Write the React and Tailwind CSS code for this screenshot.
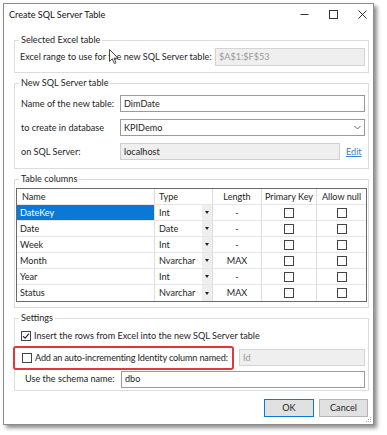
import React from 'react';

const rows = [
    { name: 'DateKey', type: 'Int', len: '-' },
    { name: 'Date', type: 'Date', len: '-' },
    { name: 'Week', type: 'Int', len: '-' },
    { name: 'Month', type: 'Nvarchar', len: 'MAX' },
    { name: 'Year', type: 'Int', len: '-' },
    { name: 'Status', type: 'Nvarchar', len: 'MAX' },
];

function Box({ checked }) {
    return (
        <span className="w-[10px] h-[10px] border border-[#444] bg-white flex items-center justify-center shrink-0">
            {checked && (
                <svg width="8" height="8" viewBox="0 0 8 8">
                    <path d="M1 4.2 L3.1 6.2 L7 1.6" fill="none" stroke="#222" strokeWidth="1.1" />
                </svg>
            )}
        </span>
    );
}

function Legend({ children }) {
    return (
        <span className="block w-fit -mt-[7px] ml-[4px] px-[2px] bg-white leading-[12px] text-[#1e1e1e]">
            {children}
        </span>
    );
}

export default function App() {
    return (
        <div className="w-[387px] h-[435px] bg-white pt-[3px] pl-[3px] font-['Lato',sans-serif] text-[9.1px] text-[#1e1e1e] whitespace-nowrap">
            <div className="relative w-[371px] h-[422px] border border-[#8c8c8c] bg-white shadow-[3px_3px_4px_rgba(0,0,0,0.45)] flex flex-col">
                {/* title bar */}
                <div className="h-[21px] flex items-center pl-[5px] shrink-0">
                    <span className="text-[#111]">Create SQL Server Table</span>
                    <div className="ml-auto flex items-center gap-[20px] pr-[6px]">
                        <svg width="9" height="9" viewBox="0 0 9 9"><path d="M0.5 4.5 H8.5" stroke="#333" strokeWidth="1" /></svg>
                        <svg width="9" height="9" viewBox="0 0 9 9"><rect x="0.5" y="0.5" width="8" height="8" fill="none" stroke="#333" strokeWidth="1" /></svg>
                        <svg width="9" height="9" viewBox="0 0 9 9"><path d="M0.5 0.5 L8.5 8.5 M8.5 0.5 L0.5 8.5" stroke="#333" strokeWidth="1" /></svg>
                    </div>
                </div>

                <div className="px-[10px] pr-[4px] flex flex-col">
                    {/* Selected Excel table */}
                    <div className="mt-[15px] h-[33px] border border-[#dcdcdc]">
                        <Legend>Selected Excel table</Legend>
                        <div className="mt-[2px] flex items-center pl-[5px] pr-[3px]">
                            <span>Excel range to use for the new SQL Server table:</span>
                            <span className="ml-auto w-[150px] h-[18px] border border-[#d4d4d4] bg-[#efefef] flex items-center px-[3px] text-[#9a9a9a]">$A$1:$F$53</span>
                        </div>
                    </div>

                    {/* New SQL Server table */}
                    <div className="mt-[10px] h-[86px] border border-[#dcdcdc]">
                        <Legend>New SQL Server table</Legend>
                        <div className="mt-[6px] flex flex-col gap-[7px] pl-[6px] pr-[3px]">
                            <div className="flex items-center">
                                <span className="w-[99px]">Name of the new table:</span>
                                <span className="flex-1 h-[17px] border border-[#9a9a9a] bg-white flex items-center px-[3px]">DimDate</span>
                            </div>
                            <div className="flex items-center">
                                <span className="w-[99px]">to create in database</span>
                                <span className="flex-1 h-[17px] border border-[#9a9a9a] bg-white flex items-center px-[3px]">
                                    KPIDemo
                                    <svg className="ml-auto" width="7" height="5" viewBox="0 0 7 5"><path d="M0.5 1 L3.5 4 L6.5 1" fill="none" stroke="#555" strokeWidth="0.9" /></svg>
                                </span>
                            </div>
                            <div className="flex items-center">
                                <span className="w-[99px]">on SQL Server:</span>
                                <span className="w-[220px] h-[17px] border border-[#cfcfcf] bg-[#efefef] flex items-center px-[3px]">localhost</span>
                                <span className="ml-[6px] text-[#3a7dc9] underline">Edit</span>
                            </div>
                        </div>
                    </div>

                    {/* Table columns */}
                    <div className="mt-[10px] h-[129px] border border-[#dcdcdc]">
                        <Legend>Table columns</Legend>
                        <div className="mt-[3px] mx-[1px] border border-[#6a6a6a] bg-white">
                            <div className="flex h-[16px] border-b border-[#e6e6e6]">
                                <span className="w-[138px] border-r border-[#dedede] flex items-center pl-[5px]">Name</span>
                                <span className="w-[58px] border-r border-[#dedede] flex items-center pl-[4px]">Type</span>
                                <span className="w-[49px] border-r border-[#dedede] flex items-center justify-center">Length</span>
                                <span className="w-[55px] border-r border-[#dedede] flex items-center justify-center">Primary Key</span>
                                <span className="flex-1 flex items-center justify-center">Allow null</span>
                            </div>
                            {rows.map((r, i) => (
                                <div key={r.name} className="flex h-[16px] border-b border-[#e6e6e6] last:border-b-0">
                                    <span className={`w-[138px] border-r border-[#dedede] flex items-center pl-[3px] ${i === 0 ? 'bg-[#0a78d4] text-white' : ''}`}>{r.name}</span>
                                    <span className="w-[47px] flex items-center pl-[4px]">{r.type}</span>
                                    <span className="w-[11px] border-r border-[#dedede] bg-[#efefef] flex items-center justify-center">
                                        <svg width="4" height="3" viewBox="0 0 4 3"><path d="M0 0 H4 L2 3 Z" fill="#222" /></svg>
                                    </span>
                                    <span className="w-[49px] border-r border-[#dedede] flex items-center justify-center">{r.len}</span>
                                    <span className="w-[55px] border-r border-[#dedede] flex items-center justify-center"><Box /></span>
                                    <span className="flex-1 flex items-center justify-center"><Box /></span>
                                </div>
                            ))}
                        </div>
                    </div>

                    {/* Settings */}
                    <div className="mt-[10px] h-[73px] border border-[#dcdcdc]">
                        <Legend>Settings</Legend>
                        <div className="mt-[5px] flex items-center gap-[3px] pl-[6px]">
                            <Box checked />
                            <span>Insert the rows from Excel into the new SQL Server table</span>
                        </div>
                        <div className="mt-[3px] flex items-center pr-[3px]">
                            <div className="-ml-[2px] w-[221px] h-[24px] border-2 border-[#e0363c] rounded-[3px] flex items-center gap-[3px] pl-[7px]">
                                <Box />
                                <span className="tracking-[-0.15px]">Add an auto-incrementing Identity column named:</span>
                            </div>
                            <span className="ml-auto w-[126px] h-[17px] border border-[#d4d4d4] bg-[#efefef] flex items-center px-[3px] text-[#9a9a9a]">Id</span>
                        </div>
                        <div className="mt-[1px] flex items-center pl-[10px] pr-[3px]">
                            <span className="w-[96px]">Use the schema name:</span>
                            <span className="flex-1 h-[17px] border border-[#9a9a9a] bg-white flex items-center px-[3px]">dbo</span>
                        </div>
                    </div>

                    {/* buttons */}
                    <div className="mt-[8px] flex justify-end gap-[5px] pr-[1px]">
                        <button className="w-[50px] h-[18px] bg-[#e1e1e1] border border-[#0a78d4] flex items-center justify-center">OK</button>
                        <button className="w-[49px] h-[18px] bg-[#e1e1e1] border border-[#b4b4b4] flex items-center justify-center">Cancel</button>
                    </div>
                </div>

                {/* resize grip */}
                <svg className="absolute right-[1px] bottom-[1px]" width="6" height="6" viewBox="0 0 6 6">
                    <rect x="4" y="0" width="1" height="1" fill="#aaa" />
                    <rect x="2" y="2" width="1" height="1" fill="#aaa" />
                    <rect x="4" y="2" width="1" height="1" fill="#aaa" />
                    <rect x="0" y="4" width="1" height="1" fill="#aaa" />
                    <rect x="2" y="4" width="1" height="1" fill="#aaa" />
                    <rect x="4" y="4" width="1" height="1" fill="#aaa" />
                </svg>

                {/* mouse cursor */}
                <svg className="absolute left-[105px] top-[45px]" width="10" height="16" viewBox="0 0 10 16">
                    <path d="M0.5 0.5 L0.5 12.5 L3.3 9.8 L5.3 14.5 L7 13.8 L5 9.2 L9 9.2 Z" fill="#fff" stroke="#222" strokeWidth="0.8" />
                </svg>
            </div>
        </div>
    );
}
